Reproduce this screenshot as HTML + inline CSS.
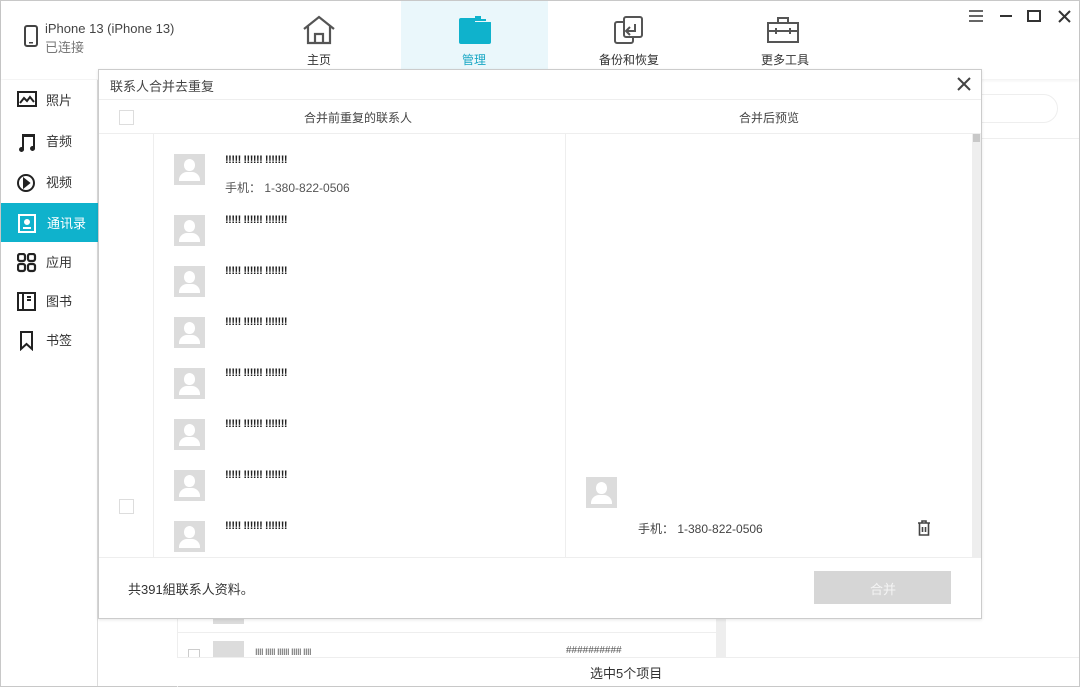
<!DOCTYPE html>
<html><head><meta charset="utf-8"><style>
*{margin:0;padding:0;box-sizing:border-box}
body{width:1080px;height:687px;position:relative;overflow:hidden;background:#fff;font-family:"Liberation Sans","Noto Sans CJK SC",sans-serif;color:#333}
.abs{position:absolute}
.win{left:0;top:0;width:1080px;height:687px;border:1px solid #c8c8c8}
.t{font-size:12px;position:absolute}
.av{position:absolute;width:31px;height:31px;background:#dcdcdc;overflow:hidden}
.av:before{content:"";position:absolute;left:10px;top:5px;width:11px;height:12px;border-radius:50% 50% 45% 45%;background:#fff}
.av:after{content:"";position:absolute;left:5px;top:18px;width:21px;height:9px;border-radius:8px 8px 0 0;background:#fff}
.nm{position:absolute;left:225px;font-size:11px;font-weight:bold;letter-spacing:-0.5px;color:#222}
.side{position:absolute;left:0;width:98px;height:40px;font-size:13px}
.side span{position:absolute;left:46px;top:10px}
.side svg{position:absolute;left:17px;top:11px}
</style></head><body>
<div class="abs win"></div>
<!-- header -->
<div class="abs" style="left:1px;top:1px;width:1078px;height:78px;background:#fff;box-shadow:0 2px 3px rgba(0,0,0,.05)"></div>
<div class="abs" style="left:401px;top:1px;width:147px;height:70px;background:#eaf7fb"></div>
<svg class="abs" style="left:24px;top:25px" width="14" height="22"><rect x="1" y="1" width="12" height="20" rx="2" fill="none" stroke="#444" stroke-width="2"/><rect x="5" y="17" width="4" height="1.5" fill="#444"/></svg>
<div class="t" style="left:45px;top:21px;font-size:13px;color:#444">iPhone 13 (iPhone 13)</div>
<div class="t" style="left:45px;top:37px;font-size:13px;color:#777">已连接</div>
<svg class="abs" style="left:302px;top:15px" width="34" height="30" fill="none" stroke="#555" stroke-width="2.2"><path d="M2 14 L17 2 L32 14 M6 11 V28 H28 V11 M13 28 V19 H21 V28"/></svg>
<div class="t" style="left:307px;top:51px">主页</div>
<svg class="abs" style="left:458px;top:15px" width="34" height="30"><path d="M1 5 Q1 3 3 3 H17 V6 H31 Q33 6 33 8 V27 Q33 29 31 29 H3 Q1 29 1 27 Z" fill="#0fb2cc"/><rect x="17" y="1" width="6" height="6" fill="#0fb2cc"/><rect x="23" y="4" width="5" height="3" fill="#0fb2cc"/><rect x="17" y="6" width="16" height="1" fill="#eaf7fb"/></svg>
<div class="t" style="left:462px;top:51px;color:#19a7c4">管理</div>
<svg class="abs" style="left:613px;top:15px" width="32" height="30" fill="none" stroke="#555" stroke-width="2"><rect x="2" y="7" width="18" height="21" rx="2"/><rect x="11" y="2" width="18" height="20" rx="2" fill="#fff"/><path d="M22 9 V16 H14 M17 12 L13 16 L17 20"/></svg>
<div class="t" style="left:599px;top:51px">备份和恢复</div>
<svg class="abs" style="left:766px;top:16px" width="34" height="28" fill="none" stroke="#555" stroke-width="2"><rect x="2" y="7" width="30" height="19"/><path d="M12 7 V2 H22 V7 M2 15 H32 M10 12 V18 M24 12 V18"/></svg>
<div class="t" style="left:761px;top:51px">更多工具</div>
<svg class="abs" style="left:966px;top:9px" width="110" height="16" stroke="#333" stroke-width="2" fill="none"><path d="M3 2H17M3 7H17M3 12H17" stroke-width="1.5"/><path d="M34 7H46"/><rect x="62" y="2" width="12" height="10"/><path d="M93 2L104 13M104 2L93 13"/></svg>
<!-- sidebar -->
<div class="abs" style="left:1px;top:80px;width:97px;height:606px;border-right:1px solid #ddd;background:#fff"></div>
<div class="side" style="top:80px"><svg width="20" height="16" fill="none" stroke="#222" stroke-width="2"><rect x="1" y="1" width="18" height="14"/><path d="M3 12 L7 7 L10 10 L13 6 L17 11"/></svg><span>照片</span></div>
<div class="side" style="top:121px"><svg width="20" height="20" fill="#222"><path d="M5 2 H18 V16 A2.5 2.5 0 1 1 16 14 V5 H7 V17 A2.5 2.5 0 1 1 5 15 Z"/></svg><span>音频</span></div>
<div class="side" style="top:162px"><svg width="20" height="20" fill="none" stroke="#222" stroke-width="2"><circle cx="9" cy="10" r="8"/><path d="M7 6 L12 10 L7 14 Z" fill="#222"/></svg><span>视频</span></div>
<div class="side" style="top:203px;background:#0fb2cc;color:#fff;height:39px;left:1px"><svg width="20" height="20" fill="none" stroke="#fff" stroke-width="2"><rect x="1" y="1" width="16" height="17"/><circle cx="9" cy="8" r="2" fill="#fff"/><path d="M5 14 H13" /></svg><span>通讯录</span></div>
<div class="side" style="top:242px"><svg width="20" height="20" fill="none" stroke="#222" stroke-width="2.2"><rect x="1" y="1" width="7" height="7" rx="2"/><rect x="11" y="1" width="7" height="7" rx="2"/><rect x="1" y="11" width="7" height="7" rx="2"/><rect x="11" y="11" width="7" height="7" rx="2"/></svg><span>应用</span></div>
<div class="side" style="top:281px"><svg width="20" height="20" fill="none" stroke="#222" stroke-width="2"><rect x="1" y="1" width="17" height="17"/><path d="M6 1 V18 M10 5 H14 M10 8 H14"/></svg><span>图书</span></div>
<div class="side" style="top:320px"><svg width="20" height="20" fill="none" stroke="#222" stroke-width="2"><path d="M4 1 H15 V18 L9.5 13 L4 18 Z"/></svg><span>书签</span></div>
<!-- background content -->
<div class="abs" style="left:950px;top:94px;width:108px;height:29px;border:1px solid #eee;border-radius:15px"></div>
<div class="abs" style="left:981px;top:138px;width:98px;height:1px;background:#eee"></div>
<div class="abs" style="left:716px;top:618px;width:10px;height:40px;background:#eee"></div>
<div class="abs" style="left:177px;top:618px;width:1px;height:69px;background:#eee"></div>
<div class="abs" style="left:213px;top:618px;width:31px;height:6px;background:#dcdcdc"></div>
<div class="abs" style="left:177px;top:632px;width:539px;height:1px;background:#eee"></div>
<div class="abs" style="left:188px;top:649px;width:12px;height:12px;border:1px solid #ccc"></div>
<div class="abs" style="left:213px;top:641px;width:31px;height:20px;background:#dcdcdc"></div>
<div class="t" style="left:255px;top:647px;font-size:9px;color:#555;letter-spacing:-0.5px">IIII IIIII IIIIII IIIII IIII</div>
<div class="t" style="left:566px;top:645px;font-size:10px;color:#555">##########</div>
<div class="abs" style="left:177px;top:657px;width:902px;height:29px;background:#fff;border-top:1px solid #eee"></div>
<div class="t" style="left:590px;top:663px;font-size:13px;color:#333">选中5个项目</div>
<!-- modal -->
<div class="abs" style="left:98px;top:69px;width:884px;height:550px;background:#fff;border:1px solid #ccc;box-shadow:0 1px 3px rgba(0,0,0,.1)"></div>
<div class="t" style="left:110px;top:76px;font-size:13px;color:#444">联系人合并去重复</div>
<svg class="abs" style="left:956px;top:76px" width="16" height="16" stroke="#444" stroke-width="2"><path d="M2 2L14 14M14 2L2 14"/></svg>
<div class="abs" style="left:99px;top:99px;width:882px;height:1px;background:#eee"></div>
<div class="abs" style="left:119px;top:110px;width:15px;height:15px;border:1px solid #ddd"></div>
<div class="t" style="left:304px;top:109px;color:#444">合并前重复的联系人</div>
<div class="t" style="left:739px;top:109px;color:#444">合并后预览</div>
<div class="abs" style="left:99px;top:133px;width:882px;height:1px;background:#eee"></div>
<div class="abs" style="left:153px;top:134px;width:1px;height:423px;background:#eee"></div>
<div class="abs" style="left:565px;top:134px;width:1px;height:423px;background:#eee"></div>
<div class="abs" style="left:972px;top:134px;width:9px;height:423px;background:#eee"></div>
<div class="abs" style="left:973px;top:134px;width:7px;height:8px;background:#c8c8c8"></div>
<div class="abs" style="left:119px;top:499px;width:15px;height:15px;border:1px solid #ddd"></div>
<div class="av" style="left:174px;top:154px"></div><div class="nm" style="top:154px">!!!!! !!!!!! !!!!!!!</div>
<div class="t" style="left:225px;top:179px;color:#555">手机： 1-380-822-0506</div>
<div class="av" style="left:174px;top:215px"></div><div class="nm" style="top:214px">!!!!! !!!!!! !!!!!!!</div>
<div class="av" style="left:174px;top:266px"></div><div class="nm" style="top:265px">!!!!! !!!!!! !!!!!!!</div>
<div class="av" style="left:174px;top:317px"></div><div class="nm" style="top:316px">!!!!! !!!!!! !!!!!!!</div>
<div class="av" style="left:174px;top:368px"></div><div class="nm" style="top:367px">!!!!! !!!!!! !!!!!!!</div>
<div class="av" style="left:174px;top:419px"></div><div class="nm" style="top:418px">!!!!! !!!!!! !!!!!!!</div>
<div class="av" style="left:174px;top:470px"></div><div class="nm" style="top:469px">!!!!! !!!!!! !!!!!!!</div>
<div class="av" style="left:174px;top:521px;height:31px"></div><div class="nm" style="top:520px">!!!!! !!!!!! !!!!!!!</div>
<div class="av" style="left:586px;top:477px"></div>
<div class="t" style="left:638px;top:520px;color:#444">手机： 1-380-822-0506</div>
<svg class="abs" style="left:917px;top:520px" width="14" height="16" fill="none" stroke="#444" stroke-width="1.6"><path d="M1 3H13M5 3V1H9V3M2.5 3V15H11.5V3M5.5 7V12M8.5 7V12"/></svg>
<div class="abs" style="left:99px;top:557px;width:882px;height:1px;background:#eee"></div>
<div class="t" style="left:128px;top:579px;font-size:13px;color:#333">共391組联系人资料。</div>
<div class="abs" style="left:814px;top:571px;width:137px;height:33px;background:#d6d6d6"></div>
<div class="t" style="left:870px;top:579px;font-size:13px;color:#f4f4f4">合并</div>
</body></html>
